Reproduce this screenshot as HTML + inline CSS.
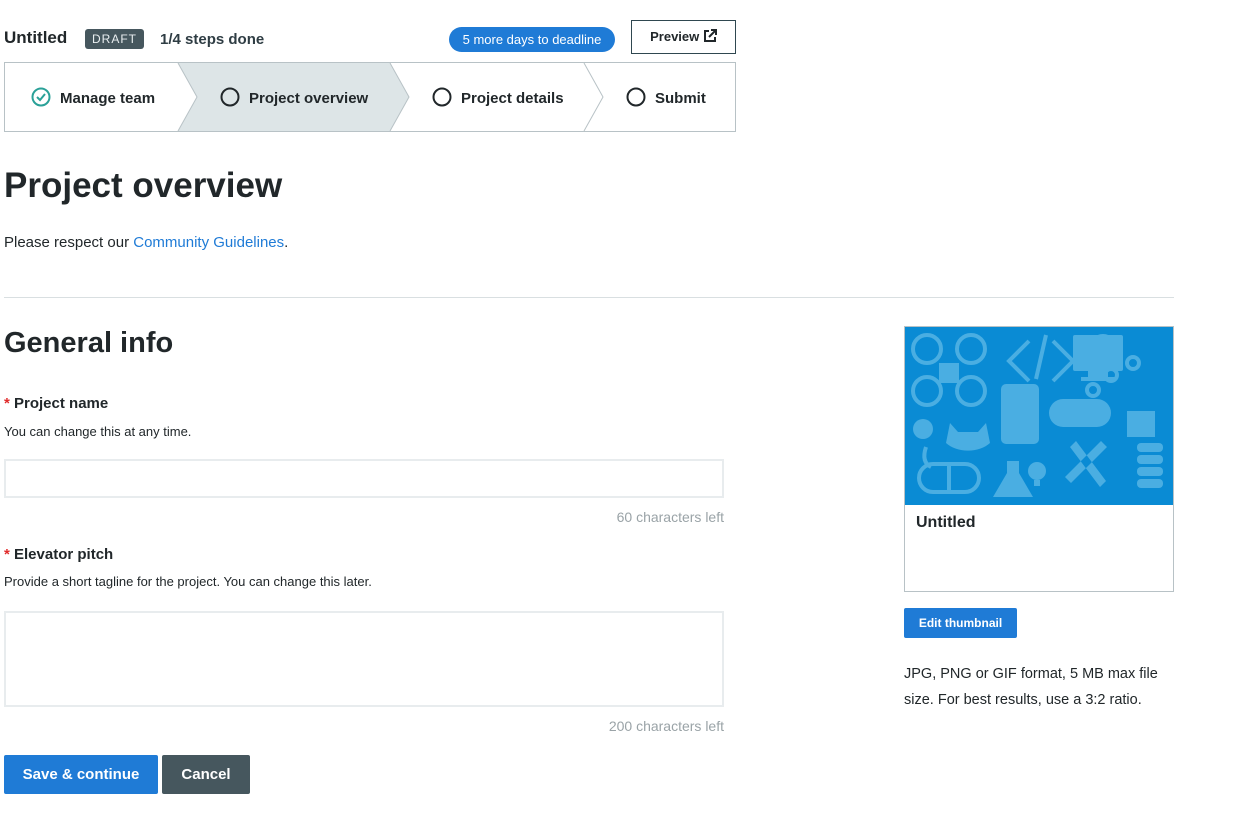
<!DOCTYPE html>
<html><head><meta charset="utf-8"><style>
*{box-sizing:border-box;margin:0;padding:0}
body{width:1240px;height:825px;background:#fff;font-family:"Liberation Sans",sans-serif;color:#21272a;position:relative;overflow:hidden}
.a{position:absolute}
.b{font-weight:bold}
</style></head><body>
<div class="a b" style="left:4px;top:28px;font-size:17px">Untitled</div>
<div class="a" style="left:85px;top:29px;width:59px;height:20px;background:#46575e;color:#e9eef0;border-radius:3px;font-size:12px;letter-spacing:1px;text-align:center;line-height:20px">DRAFT</div>
<div class="a b" style="left:160px;top:31px;font-size:15px;color:#2f3d44">1/4 steps done</div>
<div class="a" style="left:449px;top:27px;width:166px;height:25px;background:#1f7bd6;color:#fff;border-radius:13px;font-size:13px;text-align:center;line-height:25px">5 more days to deadline</div>
<div class="a b" style="left:631px;top:20px;width:105px;height:34px;border:1px solid #2f4750;font-size:13px;text-align:center;line-height:32px;color:#21272a">Preview <svg width="14" height="14" viewBox="0 0 14 14" style="vertical-align:-2px"><path d="M6 2H2v10h10V8" fill="none" stroke="#21272a" stroke-width="2"/><path d="M8 1h5v5M13 1L6 8" fill="none" stroke="#21272a" stroke-width="2"/></svg></div>

<svg class="a" style="left:4px;top:62px" width="732" height="70">
<rect x="0.5" y="0.5" width="731" height="69" fill="#fff" stroke="#b8c2c6"/>
<polygon points="174,1 386,1 405,35 386,69 174,69 193,35" fill="#dde5e7"/>
<polyline points="174,1 193,35 174,69" fill="none" stroke="#b8c2c6"/>
<polyline points="386,1 405,35 386,69" fill="none" stroke="#b8c2c6"/>
<polyline points="580,1 599,35 580,69" fill="none" stroke="#b8c2c6"/>
<circle cx="37" cy="35" r="8.5" fill="none" stroke="#2aa198" stroke-width="2"/>
<path d="M33 35l3 3 5-6" fill="none" stroke="#2aa198" stroke-width="2"/>
<circle cx="226" cy="35" r="8.5" fill="none" stroke="#21272a" stroke-width="2"/>
<circle cx="438" cy="35" r="8.5" fill="none" stroke="#21272a" stroke-width="2"/>
<circle cx="632" cy="35" r="8.5" fill="none" stroke="#21272a" stroke-width="2"/>
<g font-family="Liberation Sans" font-weight="bold" font-size="15" fill="#21272a">
<text x="56" y="41">Manage team</text><text x="245" y="41">Project overview</text>
<text x="457" y="41">Project details</text><text x="651" y="41">Submit</text></g>
</svg>

<div class="a b" style="left:4px;top:166px;font-size:35px">Project overview</div>
<div class="a" style="left:4px;top:234px;font-size:15px">Please respect our <span style="color:#1f7bd6">Community Guidelines</span>.</div>
<div class="a" style="left:4px;top:297px;width:1170px;height:1px;background:#d9dfe1"></div>

<div class="a b" style="left:4px;top:327px;font-size:29px">General info</div>
<div class="a b" style="left:4px;top:395px;font-size:15px"><span style="color:#e02b2b">*</span> Project name</div>
<div class="a" style="left:4px;top:424px;font-size:13px">You can change this at any time.</div>
<div class="a" style="left:4px;top:459px;width:720px;height:39px;border:2px solid #e8ecee"></div>
<div class="a" style="left:524px;top:509px;width:200px;text-align:right;font-size:14px;color:#9aa3a7">60 characters left</div>
<div class="a b" style="left:4px;top:546px;font-size:15px"><span style="color:#e02b2b">*</span> Elevator pitch</div>
<div class="a" style="left:4px;top:574px;font-size:13px">Provide a short tagline for the project. You can change this later.</div>
<div class="a" style="left:4px;top:611px;width:720px;height:96px;border:2px solid #e8ecee"></div>
<div class="a" style="left:524px;top:718px;width:200px;text-align:right;font-size:14px;color:#9aa3a7">200 characters left</div>
<div class="a b" style="left:4px;top:755px;width:154px;height:39px;background:#1f7bd6;color:#fff;border-radius:2px;font-size:15px;text-align:center;line-height:39px">Save &amp; continue</div>
<div class="a b" style="left:162px;top:755px;width:88px;height:39px;background:#46575e;color:#fff;border-radius:2px;font-size:15px;text-align:center;line-height:39px">Cancel</div>

<div class="a" style="left:904px;top:326px;width:270px;height:266px;border:1px solid #b8c2c6"></div>
<svg class="a" style="left:905px;top:327px" width="268" height="178" viewBox="0 0 268 178">
<rect width="268" height="178" fill="#0a8bd4"/>
<g fill="none" stroke="#4aaee2" stroke-width="4">
<circle cx="22" cy="22" r="14"/><circle cx="66" cy="22" r="14"/><circle cx="22" cy="64" r="14"/><circle cx="66" cy="64" r="14"/>
<path d="M124 14l-20 20 20 20M148 14l20 20-20 20"/><path d="M141 8l-10 44"/>
<circle cx="228" cy="36" r="6"/><circle cx="206" cy="48" r="6"/><circle cx="188" cy="63" r="6"/>
<path d="M188 13q10-8 20 0M192 18q6-5 12 0"/>
<path d="M28 165h32a14 14 0 0 0 0-28H28a14 14 0 0 0 0 28zM44 137v28M26 140q-10-5-5-20"/>
</g>
<g fill="#4aaee2">
<rect x="34" y="36" width="20" height="20"/>
<rect x="168" y="8" width="50" height="36" rx="2"/><rect x="183" y="44" width="20" height="8"/><rect x="176" y="50" width="34" height="4"/>
<rect x="96" y="57" width="38" height="60" rx="5"/>
<rect x="144" y="72" width="62" height="28" rx="14"/>
<circle cx="18" cy="102" r="10"/>
<path d="M45 96l8 9h20l8-9 4 20a28 20 0 0 1-44 0z"/>
<path d="M102 134h12v12l14 24H88l14-24z"/>
<circle cx="132" cy="144" r="9"/><rect x="129" y="153" width="6" height="6"/>
<path d="M160 150l36-36 6 6-36 36zM165 120l30 40 6-6-30-40z"/>
<rect x="222" y="84" width="28" height="26"/><rect x="232" y="116" width="26" height="9" rx="4"/><rect x="232" y="128" width="26" height="9" rx="4"/><rect x="232" y="140" width="26" height="9" rx="4"/><rect x="232" y="152" width="26" height="9" rx="4"/>
</g>
</svg>
<div class="a b" style="left:916px;top:514px;font-size:16px">Untitled</div>
<div class="a b" style="left:904px;top:608px;width:113px;height:30px;background:#1f7bd6;color:#fff;border-radius:2px;font-size:12px;text-align:center;line-height:30px">Edit thumbnail</div>
<div class="a" style="left:904px;top:661px;width:262px;font-size:14.5px;line-height:26px">JPG, PNG or GIF format, 5 MB max file size. For best results, use a 3:2 ratio.</div>
</body></html>
